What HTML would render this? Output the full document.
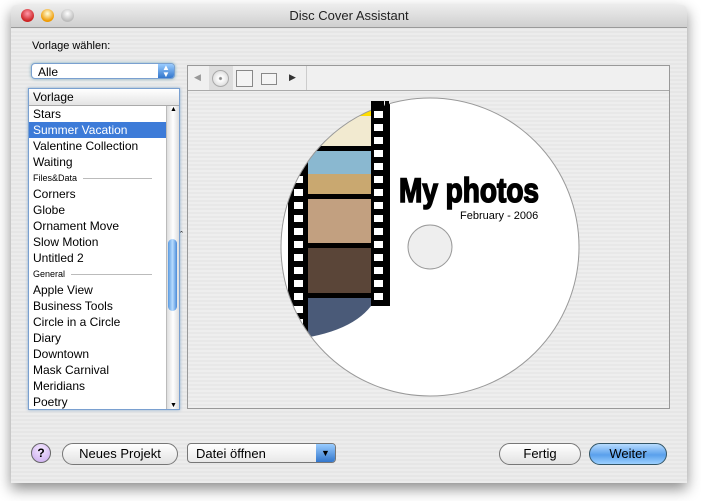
<!DOCTYPE html><html><head><style>
body{margin:0;width:701px;height:501px;background:#fff;font-family:"Liberation Sans",sans-serif;font-size:12px;overflow:hidden;position:relative}
.win{position:absolute;left:11px;top:5px;width:676px;height:478px;background:repeating-linear-gradient(#ececec 0 2px,#e6e6e6 2px 4px);box-shadow:0 6px 14px rgba(0,0,0,.45);border-radius:5px 5px 0 0}
.title{position:absolute;left:0;top:0;width:676px;height:22px;background:linear-gradient(#ececec,#cfcfcf);border-bottom:1px solid #9a9a9a;border-radius:5px 5px 0 0;text-align:center;line-height:22px;font-size:13px;color:#222}
.dot{position:absolute;top:4px;width:13px;height:13px;border-radius:50%}
.abs{position:absolute}
.list div{height:16px;line-height:16px;padding-left:4px;color:#000}
.sec{font-size:9px;color:#888;display:flex;align-items:center}
.sec:after{content:"";flex:1;border-top:1px solid #bbb;margin:0 14px 0 6px}
.btn{position:absolute;height:20px;border:1px solid #777;border-radius:11px;background:linear-gradient(#fff,#e2e2e2);text-align:center;line-height:20px;font-size:13px}
</style></head><body>
<div class="win">
<div class="title">Disc Cover Assistant
<div class="dot" style="left:10px;background:radial-gradient(circle at 50% 35%,#f9a,#c22 70%)"></div>
<div class="dot" style="left:30px;background:radial-gradient(circle at 50% 35%,#ffd,#e90 70%)"></div>
<div class="dot" style="left:50px;background:radial-gradient(circle at 50% 35%,#fff,#bbb 70%)"></div>
</div>
</div>
<div class="abs" style="left:32px;top:40px;font-size:11px">Vorlage wählen:</div>
<div class="abs" style="left:31px;top:63px;width:144px;height:16px;border:1px solid #7aa0d0;border-radius:4px;background:#fff;box-shadow:0 0 3px #7ab;font-size:12px;line-height:16px;padding-left:6px;box-sizing:border-box">Alle<div class="abs" style="right:0;top:0;width:16px;height:14px;background:linear-gradient(#9cf,#37c);border-radius:0 3px 3px 0;color:#fff;font-size:8px;text-align:center;line-height:7px">▲<br>▼</div></div>
<div class="abs" style="left:28px;top:88px;width:150px;height:320px;border:1px solid #7aa0d0;background:#fff;box-shadow:0 0 3px #8ac;overflow:hidden">
<div style="height:16px;line-height:16px;padding-left:4px;background:linear-gradient(#fff,#e4e4e4);border-bottom:1px solid #aaa">Vorlage</div>
<div class="list" style="position:absolute;top:17px;left:0;width:137px">
<div>Stars</div><div style="background:#3d7bd8;color:#fff">Summer Vacation</div><div>Valentine Collection</div><div>Waiting</div><div class="sec">Files&amp;Data</div><div>Corners</div><div>Globe</div><div>Ornament Move</div><div>Slow Motion</div><div>Untitled 2</div><div class="sec">General</div><div>Apple View</div><div>Business Tools</div><div>Circle in a Circle</div><div>Diary</div><div>Downtown</div><div>Mask Carnival</div><div>Meridians</div><div>Poetry</div></div>
<div class="abs" style="left:137px;top:17px;width:12px;height:303px;background:linear-gradient(90deg,#ddd,#fff,#ddd);border-left:1px solid #bbb"><div class="abs" style="top:0;left:3px;font-size:7px">▲</div><div class="abs" style="bottom:0;left:3px;font-size:7px">▼</div><div class="abs" style="left:1px;top:133px;width:9px;height:72px;border-radius:5px;background:linear-gradient(90deg,#5a9ae0,#b8dcff,#4a8ad8)"></div></div>
</div>
<div class="abs" style="left:180px;top:230px;font-size:9px">ˆ</div>
<div class="abs" style="left:187px;top:65px;width:481px;height:342px;border:1px solid #999;background:repeating-linear-gradient(#eeeeee 0 2px,#e8e8e8 2px 4px);overflow:hidden">
<div class="abs" style="left:0;top:0;width:481px;height:24px;border-bottom:1px solid #aaa;background:#f0f0f0"></div>
<div class="abs" style="left:0;top:0;width:118px;height:24px;border-right:1px solid #ccc"></div>
<div class="abs" style="left:6px;top:6px;font-size:9px;color:#999">◀</div>
<div class="abs" style="left:21px;top:0;width:24px;height:24px;background:#ddd"></div>
<div class="abs" style="left:24px;top:4px;width:15px;height:15px;border-radius:50%;border:1px solid #aaa;background:radial-gradient(#888 1px,#fff 2px,#ddd 8px)"></div>
<div class="abs" style="left:48px;top:4px;width:15px;height:15px;border:1px solid #888;background:#f4f4f4"></div>
<div class="abs" style="left:73px;top:7px;width:14px;height:10px;border:1px solid #888;background:#f4f4f4"></div>
<div class="abs" style="left:101px;top:6px;font-size:9px;color:#333">▶</div>
<svg class="abs" style="left:0;top:0" width="481" height="342">
<defs><clipPath id="c"><circle cx="242" cy="181" r="149"/></clipPath></defs>
<circle cx="242" cy="181" r="149" fill="#fff"/>
<g clip-path="url(#c)">
<rect x="100" y="30" width="102" height="250" fill="#000"/>
<rect x="120" y="30" width="63" height="50" fill="#f2ead0"/><path d="M140 30 L183 30 L183 50 L150 50Z" fill="#fd0"/>
<rect x="120" y="85" width="63" height="43" fill="#8ab8d0"/><rect x="120" y="108" width="63" height="20" fill="#c9a870"/>
<rect x="120" y="133" width="63" height="44" fill="#c2a080"/>
<rect x="120" y="182" width="63" height="45" fill="#5a4538"/>
<rect x="120" y="232" width="63" height="50" fill="#4a5a78"/>
<g fill="#fff">
<rect x="106" y="110" width="9" height="7"/><rect x="106" y="123" width="9" height="7"/><rect x="106" y="136" width="9" height="7"/><rect x="106" y="149" width="9" height="7"/><rect x="106" y="162" width="9" height="7"/><rect x="106" y="175" width="9" height="7"/><rect x="106" y="188" width="9" height="7"/><rect x="106" y="201" width="9" height="7"/><rect x="106" y="214" width="9" height="7"/><rect x="106" y="227" width="9" height="7"/><rect x="106" y="240" width="9" height="7"/><rect x="106" y="253" width="9" height="7"/>
</g>
<path d="M183 240 L205 240 L205 342 L90 342 L90 275 Q160 270 183 240 Z" fill="#fff"/>
</g>
<circle cx="242" cy="181" r="149" fill="none" stroke="#999"/>
<rect x="183" y="35" width="13" height="205" fill="#000"/>
<g fill="#fff">
<rect x="186" y="45" width="9" height="7"/><rect x="186" y="58" width="9" height="7"/><rect x="186" y="71" width="9" height="7"/><rect x="186" y="84" width="9" height="7"/><rect x="186" y="97" width="9" height="7"/><rect x="186" y="110" width="9" height="7"/><rect x="186" y="123" width="9" height="7"/><rect x="186" y="136" width="9" height="7"/><rect x="186" y="149" width="9" height="7"/><rect x="186" y="162" width="9" height="7"/><rect x="186" y="175" width="9" height="7"/><rect x="186" y="188" width="9" height="7"/><rect x="186" y="201" width="9" height="7"/><rect x="186" y="214" width="9" height="7"/><rect x="186" y="227" width="9" height="7"/>
</g>
<rect x="197" y="35" width="4" height="205" fill="#000"/>
<circle cx="242" cy="181" r="22" fill="#eee" stroke="#999"/>
<text x="211" y="136" font-family="Liberation Sans" font-weight="bold" font-size="34" stroke="#000" stroke-width="1.6" textLength="140" lengthAdjust="spacingAndGlyphs">My photos</text>
<text x="272" y="153" font-family="Liberation Sans" font-size="11">February - 2006</text>
</svg>
</div>
<div class="abs" style="left:31px;top:443px;width:18px;height:18px;border-radius:50%;border:1px solid #666;background:radial-gradient(circle at 50% 30%,#f4e8ff,#c9a8ee);text-align:center;line-height:18px;font-weight:bold;font-size:12px">?</div>
<div class="btn" style="left:62px;top:443px;width:114px">Neues Projekt</div>
<div class="abs" style="left:187px;top:443px;width:149px;height:20px;border:1px solid #777;border-radius:4px;background:linear-gradient(#fff,#e8e8e8);font-size:13px;line-height:20px;padding-left:8px;box-sizing:border-box">Datei öffnen<div class="abs" style="right:0;top:0;width:19px;height:18px;background:linear-gradient(#9cf,#37c);border-radius:0 3px 3px 0;color:#000;font-size:9px;text-align:center;line-height:18px">▼</div></div>
<div class="btn" style="left:499px;top:443px;width:80px">Fertig</div>
<div class="btn" style="left:589px;top:443px;width:76px;border-color:#356;background:linear-gradient(#b8dcff,#5aa0ec 55%,#9cd0ff)">Weiter</div>
</body></html>
